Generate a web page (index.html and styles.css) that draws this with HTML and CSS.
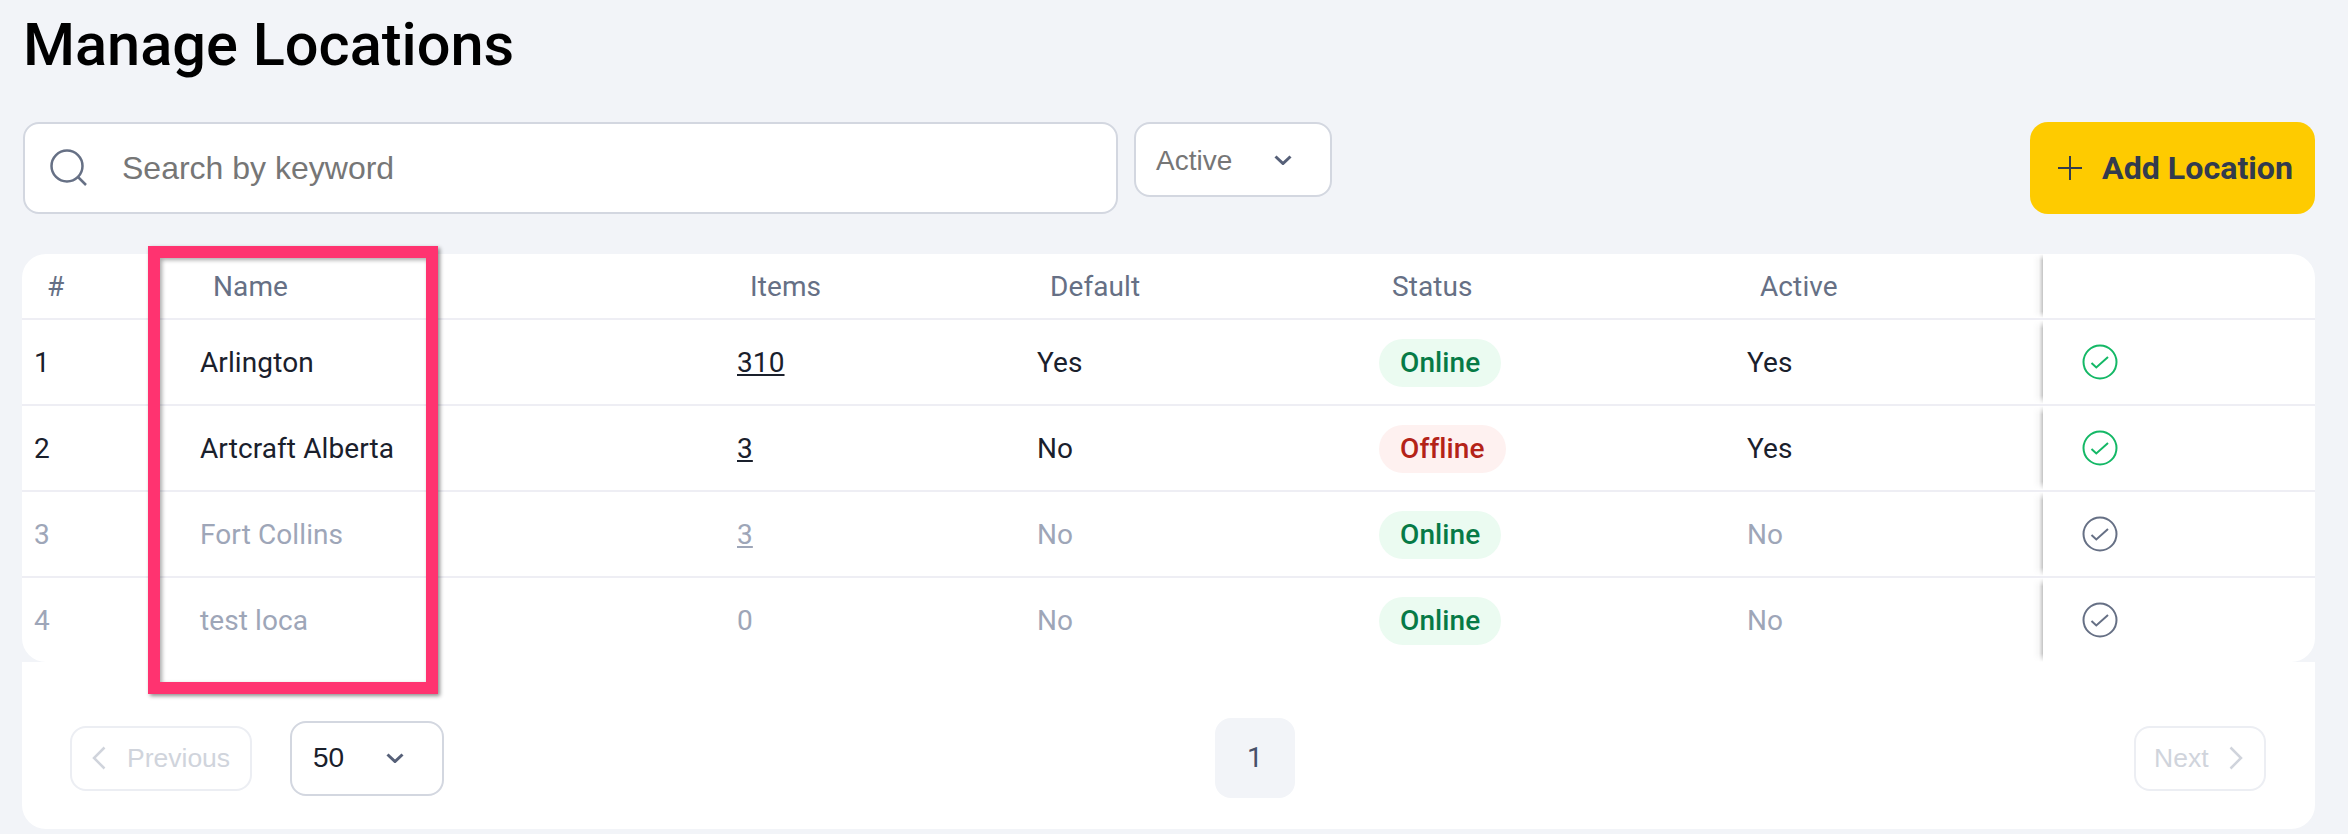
FILE: index.html
```html
<!DOCTYPE html>
<html lang="en">
<head>
  <meta charset="UTF-8">
  <title>Manage Locations</title>
  <link rel="stylesheet" href="styles.css">
</head>
<body>

  <h1 class="page-title">Manage Locations</h1>

  <div class="toolbar">
    <label class="search">
      <svg class="search-icon" viewBox="0 0 38 38"><circle cx="17" cy="17" r="15.5"/><path d="M28 28l8 8"/></svg>
      <input type="text" placeholder="Search by keyword">
    </label>
    <div class="dropdown filter">
      <span>Active</span>
      <svg class="chevron" viewBox="0 0 18 10"><path d="M1.5 1.5L9 8.5l7.5-7"/></svg>
    </div>
    <button class="add-btn">
      <svg class="plus" viewBox="0 0 24 24"><path d="M12 0v24M0 12h24"/></svg>
      Add Location
    </button>
  </div>

  <div class="table-card">
    <table>
      <thead>
        <tr>
          <th class="col-num">#</th>
          <th class="col-name">Name</th>
          <th class="col-items">Items</th>
          <th class="col-default">Default</th>
          <th class="col-status">Status</th>
          <th class="col-active">Active</th>
          <th class="col-action"></th>
        </tr>
      </thead>
      <tbody>
        <tr>
          <td>1</td>
          <td>Arlington</td>
          <td><a href="#">310</a></td>
          <td>Yes</td>
          <td><span class="pill online">Online</span></td>
          <td>Yes</td>
          <td class="col-action">
            <svg class="check on" viewBox="0 0 36 36"><circle cx="18" cy="18" r="16.5"/><path d="M9.5 19l4.8 4.5L26 13"/></svg>
          </td>
        </tr>
        <tr>
          <td>2</td>
          <td>Artcraft Alberta</td>
          <td><a href="#">3</a></td>
          <td>No</td>
          <td><span class="pill offline">Offline</span></td>
          <td>Yes</td>
          <td class="col-action">
            <svg class="check on" viewBox="0 0 36 36"><circle cx="18" cy="18" r="16.5"/><path d="M9.5 19l4.8 4.5L26 13"/></svg>
          </td>
        </tr>
        <tr class="inactive">
          <td>3</td>
          <td>Fort Collins</td>
          <td><a href="#">3</a></td>
          <td>No</td>
          <td><span class="pill online">Online</span></td>
          <td>No</td>
          <td class="col-action">
            <svg class="check" viewBox="0 0 36 36"><circle cx="18" cy="18" r="16.5"/><path d="M9.5 19l4.8 4.5L26 13"/></svg>
          </td>
        </tr>
        <tr class="inactive">
          <td>4</td>
          <td>test loca</td>
          <td>0</td>
          <td>No</td>
          <td><span class="pill online">Online</span></td>
          <td>No</td>
          <td class="col-action">
            <svg class="check" viewBox="0 0 36 36"><circle cx="18" cy="18" r="16.5"/><path d="M9.5 19l4.8 4.5L26 13"/></svg>
          </td>
        </tr>
      </tbody>
    </table>
  </div>

  <div class="pager">
    <button class="page-btn prev">
      <svg class="arrow" viewBox="0 0 14 24"><path d="M12.5 1.5L2 12l10.5 10.5"/></svg>
      Previous
    </button>
    <div class="dropdown page-size">
      <span>50</span>
      <svg class="chevron" viewBox="0 0 18 10"><path d="M1.5 1.5L9 8.5l7.5-7"/></svg>
    </div>
    <div class="page-num">1</div>
    <button class="page-btn next">
      Next
      <svg class="arrow" viewBox="0 0 14 24"><path d="M1.5 1.5L12 12 1.5 22.5"/></svg>
    </button>
  </div>

  <div class="highlight"></div>

</body>
</html>
```

FILE: styles.css
```css
* { box-sizing: border-box; }
body { margin: 0; height: 834px; overflow: hidden; position: relative; padding: 0 33px 0 22px; background: #f2f4f8; font-family: Roboto, sans-serif; font-size: 28px; letter-spacing: 0.1px; color: #1a202c; }

.page-title { margin: 0; padding: 10px 0 0 1px; height: 122px; font-size: 59.5px; line-height: 70px; font-weight: 500; letter-spacing: 0; color: #000; }

.toolbar { display: flex; align-items: flex-start; height: 132px; }
.search { display: flex; align-items: center; width: 1095px; height: 92px; margin-left: 1px; padding-left: 25px; background: #fff; border: 2px solid #d3d7e0; border-radius: 16px; }
.search-icon { width: 38px; height: 38px; fill: none; stroke: #667085; stroke-width: 2.5; }
.search input { flex: 1; margin-left: 32px; border: none; outline: none; background: none; font-family: "Liberation Sans", sans-serif; font-size: 32px; letter-spacing: 0; }
.search input::placeholder { color: #767676; opacity: 1; }

.dropdown { display: flex; align-items: center; background: #fff; border: 2px solid #d3d7e0; border-radius: 16px; font-family: "Liberation Sans", sans-serif; letter-spacing: 0; }
.chevron { width: 18px; height: 10px; fill: none; stroke: #566078; stroke-width: 3; }
.filter { width: 198px; height: 75px; margin-left: 16px; padding: 2px 0 0 20px; font-size: 28px; color: #767676; }
.filter .chevron { margin-left: 42px; margin-top: -2px; }

.add-btn { display: flex; align-items: center; width: 285px; height: 92px; margin-left: auto; padding: 0 0 0 28px; background: #fecb00; border: none; border-radius: 18px; font-family: Roboto, sans-serif; font-size: 32.2px; font-weight: 700; color: #323b4e; }
.plus { width: 24px; height: 24px; margin-right: 20px; fill: none; stroke: #323b4e; stroke-width: 2; }

.table-card { height: 408px; background: #fff; border-radius: 24px; overflow: hidden; }
table { width: 100%; table-layout: fixed; border-collapse: separate; border-spacing: 0; }
th { height: 66px; padding: 1px 0 0 25px; text-align: left; font-weight: 400; color: #667085; border-bottom: 2px solid #eeeef4; }
td { height: 86px; padding: 1px 0 0 12px; border-bottom: 2px solid #eeeef4; }
tbody tr:last-child td { height: 84px; border-bottom: none; }
td a { color: inherit; }
.col-num { width: 166px; }
.col-name { width: 537px; }
.col-items { width: 300px; }
.col-default { width: 342px; }
.col-status { width: 368px; }
.col-active { width: 308px; }
.col-action { width: 272px; position: relative; }
.col-action::before { content: ""; position: absolute; top: 0; bottom: 0; left: -10px; width: 10px; background: linear-gradient(to right, rgba(0,0,0,0), rgba(0,0,0,0.03) 60%, rgba(0,0,0,0.24)); -webkit-mask-image: linear-gradient(to bottom, transparent, #000 10%, #000 90%, transparent); mask-image: linear-gradient(to bottom, transparent, #000 10%, #000 90%, transparent); }
td.col-action { padding: 0 0 0 39px; }

.inactive td { color: #9ea6b8; }
.pill { display: inline-block; height: 48px; padding: 0 21px 0 21px; border-radius: 24px; line-height: 47px; font-weight: 500; }
.online, .inactive .online { background: #ebfbf1; color: #067a46; }
.offline, .inactive .offline { background: #fef1f0; color: #b42318; }

.check { display: block; width: 36px; height: 36px; fill: none; stroke: #667085; stroke-width: 2; }
.check.on { stroke: #14b866; }

.pager { display: flex; align-items: center; height: 167px; padding: 56px 49px 31px 48px; background: #fff; border-radius: 0 0 24px 24px; }
.page-btn { display: flex; align-items: center; height: 65px; background: #fff; border: 2px solid #eceef3; border-radius: 16px; font-family: "Liberation Sans", sans-serif; font-size: 26.5px; letter-spacing: 0; color: #d0d4dc; }
.arrow { width: 14px; height: 24px; fill: none; stroke: #d0d4dc; stroke-width: 2.5; }
.prev { width: 182px; padding: 0 0 0 20px; }
.prev .arrow { margin-right: 21px; }
.page-size { width: 154px; height: 75px; margin-left: 38px; padding-left: 21px; font-size: 28px; }
.page-size .chevron { margin-left: 42px; }
.page-num { width: 80px; height: 80px; margin-left: 771px; background: #f2f4f8; border-radius: 16px; text-align: center; line-height: 80px; color: #475069; }
.next { width: 132px; margin-left: auto; padding: 0 0 0 18px; }
.next .arrow { margin-left: 20px; }

.highlight { position: absolute; top: 246px; left: 148px; width: 290px; height: 448px; border: 12px solid #ff3370; box-shadow: 2px 2px 4px rgba(0,0,0,0.45), inset 2px 2px 4px rgba(0,0,0,0.35); pointer-events: none; }
```
